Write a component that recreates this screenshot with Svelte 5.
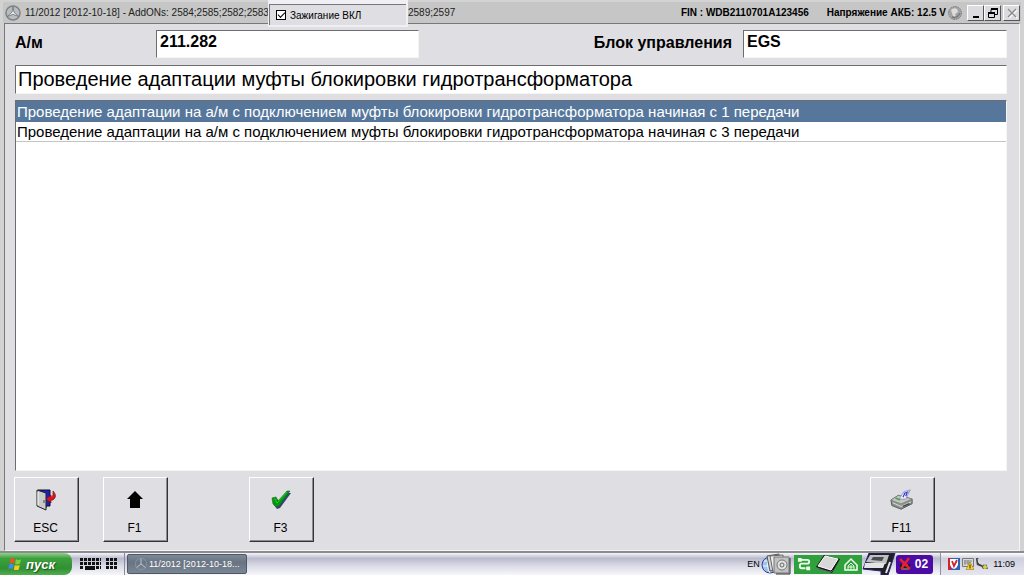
<script lang="ts">
  const vehicle = '211.282';
  const controlUnit = 'EGS';
  const heading = 'Проведение адаптации муфты блокировки гидротрансформатора';

  const actions = [
    'Проведение адаптации на а/м с подключением муфты блокировки гидротрансформатора начиная с 1 передачи',
    'Проведение адаптации на а/м с подключением муфты блокировки гидротрансформатора начиная с 3 передачи'
  ];

  let selected = $state(0);
  let ignition = $state(true);
</script>

<div class="screen">
  <div class="window">
    <header class="titlebar">
      <svg class="star" viewBox="0 0 16 16">
        <circle cx="8" cy="8" r="7" fill="#b9bcbe" stroke="#7c8285" stroke-width="1.5" />
        <path d="M8 1.5 L9 7.2 L13.6 11.5 L8 9.4 L2.4 11.5 L7 7.2 Z" fill="#e8ebec" stroke="#6d7376" stroke-width=".8" />
      </svg>
      <span class="version">11/2012 [2012-10-18] - AddONs: 2584;2585;2582;2583;</span>
      <div class="popup-slot">
        <div class="popup">
          <label><input type="checkbox" bind:checked={ignition} />Зажигание ВКЛ</label>
        </div>
      </div>
      <span class="addons">2589;2597</span>
      <b class="fin">FIN : WDB2110701A123456</b>
      <b class="voltage">Напряжение АКБ: 12.5 V</b>
      <svg class="globe" viewBox="0 0 14 14">
        <circle cx="7" cy="7" r="6.5" fill="#a4a4a4" stroke="#777" stroke-dasharray="1.5 1" />
        <path d="M3 4 Q6 1 9 3 L10 6 L7 8 L8 11 L5 10 L4 7 Z" fill="#dcdcdc" />
        <path d="M4 11 Q9 13 12 7" fill="none" stroke="#7a7a7a" stroke-width="1.5" />
      </svg>
      <div class="controls">
        <button aria-label="Свернуть">
          <svg viewBox="0 0 12 12"><path d="M3 10 H9" stroke="#000" stroke-width="2" /></svg>
        </button>
        <button aria-label="Восстановить">
          <svg viewBox="0 0 12 12">
            <path d="M4 5 V2.5 H10.5 V7.5 H8" fill="none" stroke="#000" />
            <path d="M4 2 H11 M1 6 H8" stroke="#000" stroke-width="2" />
            <path d="M1.5 6 V10.5 H7.5 V6" fill="none" stroke="#000" />
          </svg>
        </button>
        <button class="close" aria-label="Закрыть" disabled>
          <svg viewBox="0 0 12 12">
            <path d="M3 3 L11 11 M11 3 L3 11" stroke="#fff" stroke-width="1.2" />
            <path d="M2 2 L10 10 M10 2 L2 10" stroke="#8b8b8b" stroke-width="1.4" />
          </svg>
        </button>
      </div>
    </header>

    <main>
      <div class="fields">
        <label for="vehicle">А/м</label>
        <input id="vehicle" value={vehicle} readonly />
        <label class="unit-label" for="unit">Блок управления</label>
        <input id="unit" value={controlUnit} readonly />
      </div>

      <h1>{heading}</h1>

      <div class="list">
        {#each actions as action, i}
          <button class="item" class:selected={selected === i} onclick={() => (selected = i)}>{action}</button>
        {/each}
      </div>

      <div class="keys">
        <button>
          <svg viewBox="0 0 22 24">
            <path d="M3 2 H15 V18 H11 V20" fill="#1a22c0" stroke="#111" />
            <path d="M2 2 L11 5 V22 L2 18 Z" fill="#c9cccb" stroke="#222" />
            <path d="M3 4 V17" stroke="#fff" />
            <path d="M9 12 V15" stroke="#444" />
            <path d="M18 3 Q23 8 18 12 H16 V15 L11 11 L16 7 V9.500 Q19 8 18 3 Z" fill="#e0141c" stroke="#74101c" stroke-width=".7" />
          </svg>
          ESC
        </button>
        <button class="up">
          <svg viewBox="0 0 22 24"><path d="M11 3 L19 11 H16 V20 H6 V11 H3 Z" fill="#000" /></svg>
          F1
        </button>
        <button class="ok">
          <svg viewBox="0 0 22 24">
            <path d="M4 11 L7 11 L9 14 L18 5 L21 5 L10 20 L7 21 L4 17 Z" fill="#3b3f78" />
            <path d="M2 10 L6 9 L8 13 L17 3 L20 3 L9 18 L6 19 L3 16 Z" fill="#079512" stroke="#067010" stroke-width=".6" />
            <path d="M4 11 L5 11 L7 15 L17 4" fill="none" stroke="#20cb2d" />
          </svg>
          F3
        </button>
        <button class="print">
          <svg viewBox="0 0 26 24">
            <path d="M1 12 L9 7 L24 11 V16 L12 22 L2 18 Z" fill="#8d918e" stroke="#555957" />
            <path d="M1 12 L9 7 L24 11 L12 16 Z" fill="#c5c9c6" stroke="#777" stroke-width=".6" />
            <path d="M10 11 L15 3 L22 1 L17 11 Z" fill="#f3f4ff" stroke="#77a" stroke-width=".7" />
            <path d="M14 9 L16 5 M17 8 L19 3 M15 5 L20 3" stroke="#3038d0" stroke-width="1.300" />
            <path d="M6 10 L11 12" stroke="#54a548" stroke-width="2" />
            <path d="M3 15 L12 19 L23 14" fill="none" stroke="#dfe2df" />
            <path d="M14 19 L21 16" stroke="#3f4341" stroke-width="1.5" />
          </svg>
          F11
        </button>
      </div>
    </main>
  </div>

  <footer class="taskbar">
    <button class="start">
      <svg viewBox="0 0 14 14">
        <path d="M2.500 2 Q4.500 .5 7 2 L6 6.500 Q3.500 5 1.500 6.500 Z" fill="#f25022" />
        <path d="M8 2.300 Q10.500 3.500 13 2.200 L12 6.700 Q9.500 8 7 6.800 Z" fill="#7fcf3c" />
        <path d="M1.300 7.500 Q3.500 6 5.800 7.500 L4.800 12 Q2.500 10.500 .3 12 Z" fill="#3f8cf3" />
        <path d="M6.800 8 Q9.300 9.200 11.800 7.900 L10.800 12.400 Q8.300 13.600 5.800 12.500 Z" fill="#ffc61c" />
      </svg>
      пуск
    </button>
    <div class="quick">
      <svg class="keyboard" viewBox="0 0 40 14">
        <path d="M1 2.500 H22 M1 6.500 H22 M1 10.500 H5 M17 10.500 H22 M27 2.500 H39 M27 6.500 H39 M27 10.500 H39" stroke="#111" stroke-width="3" stroke-dasharray="3 1" />
        <path d="M6 11 H16" stroke="#111" stroke-width="4" />
      </svg>
    </div>
    <button class="task">
      <svg viewBox="0 0 16 16">
        <circle cx="8" cy="8" r="6.500" fill="none" stroke="#8795a3" />
        <path d="M8 2 V8 L3 12 M8 8 L13 12" fill="none" stroke="#c5d0da" />
      </svg>
      11/2012 [2012-10-18...
    </button>
    <span class="lang">EN</span>
    <svg class="stack" viewBox="0 0 33 22">
      <circle cx="9" cy="12" r="8" fill="#9ec2ea" stroke="#2b3f95" />
      <path d="M3 8 H14 M2 13 H14 M9 4 Q4 12 9 20" fill="none" stroke="#f3f8ff" />
      <path d="M6 3 L18 1 V16 L9 18 Z" fill="#d5d5d5" stroke="#555" />
      <path d="M9 3 L22 2 V18 L12 19 Z" fill="#ececec" stroke="#666" />
      <path d="M13 4 H28 V20 H13 Z" fill="#bfc1c2" stroke="#777" />
      <circle cx="21" cy="12" r="5" fill="#e1e2e2" stroke="#777" />
      <circle cx="21" cy="12" r="2" fill="none" stroke="#666" />
      <path d="M29 5 V21 H15" fill="none" stroke="#333" />
    </svg>
    <div class="green">
      <svg class="link" viewBox="0 0 16 16">
        <path d="M2 3 H11 Q13 3 13 5 Q13 7 11 7 H5 Q3 7 3 9.500 Q3 12 5 12 H9 M13 12 H10" fill="none" stroke="#eefff0" stroke-width="2" />
        <path d="M1 1 H5 V5 H1 Z M10 10 H14 V14 H10 Z" fill="#eefff0" />
      </svg>
      <svg class="tablet" viewBox="0 0 24 20">
        <path d="M0 13 L8 1 L24 5 L16 19 Z" fill="#161616" />
        <path d="M2 12 L9 2 L22 5 L15 16 Z" fill="#d7d8d7" stroke="#fff" />
        <path d="M2 15 L15 18 L17 16" fill="none" stroke="#70548f" />
      </svg>
      <svg class="home" viewBox="0 0 14 14">
        <path d="M1 8 L7 2 L13 8 V13 H1 Z" fill="none" stroke="#f2fff2" stroke-width="1.500" />
        <path d="M4 13 V9 L7 6 L10 9 V13 M7 8 V13 M4 10 H10" fill="none" stroke="#e2ffe2" />
      </svg>
    </div>
    <svg class="device" viewBox="0 0 34 22">
      <path d="M1 16 L7 0 H33 L26 22 H19 V18 Z" fill="#202024" stroke="#29237b" />
      <path d="M4 9 L8 2 H27 L24 11 Z" fill="#bfc0c2" />
      <path d="M9 7 L11 4 H22 L20 8 Z" fill="#4b4c54" />
      <path d="M3 10 H23 L21 15 H2 Z" fill="#e4e4e4" />
      <path d="M28 9 L24 20" stroke="#e7e7ee" stroke-width="2" />
    </svg>
    <div class="badge">
      <svg viewBox="0 0 12 14">
        <path d="M1 7 H11 V13 H1 Z" fill="#1b1829" />
        <path d="M2 12 H10 M3 8 H9" stroke="#c5a7ba" />
        <path d="M1 2 L11 12 M10 1 L2 12" stroke="#e3202b" stroke-width="2.500" />
      </svg>
      02
    </div>
    <div class="tray">
      <svg viewBox="0 0 12 12">
        <rect width="12" height="12" fill="#d3212e" />
        <path d="M3 0 H12 V12 H3 Z" fill="#2e61b5" />
        <path d="M2 1 H10 V7 Q9 10 6 11 Q3 10 2 7 Z" fill="#fff" />
        <path d="M4 3 L6 8 L9 2" fill="none" stroke="#d3212e" stroke-width="1.800" />
      </svg>
      <svg viewBox="0 0 12 12">
        <path d="M.5 .5 H11.500 V8.500 H.5 Z" fill="#d8d8d8" stroke="#777" />
        <path d="M2 3 H10 M2 5 H9 M3 2 V7 M6 2 V7" stroke="#888" />
        <path d="M8 4 L12 11.500 H4 Z" fill="#ffd52b" stroke="#9a7811" stroke-width=".6" />
        <path d="M8 6.500 V10.500" stroke="#222" />
      </svg>
      <svg viewBox="0 0 12 12">
        <path d="M1 0 L2 6 L7 8 L11 8" fill="none" stroke="#444" stroke-width="2.500" />
        <path d="M2 1 L3 5 L7 7" fill="none" stroke="#eee" />
        <path d="M5 8 H11 L12 11 H7 Z" fill="#5b5b5b" />
        <circle cx="9" cy="9" r="2" fill="#d7d33a" />
      </svg>
      <time>11:09</time>
    </div>
  </footer>
</div>

<style>
  :global(body) {
    margin: 0;
    background: #dfdee3;
  }

  .screen {
    display: flex;
    flex-direction: column;
    min-height: 100vh;
    font-family: "Liberation Sans", Arial, sans-serif;
    color: #000;
  }

  button,
  input {
    font-family: inherit;
    color: inherit;
    box-sizing: border-box;
    border-radius: 0;
    margin: 0;
    padding: 0;
  }

  svg {
    flex: none;
    display: block;
  }

  .window {
    flex: 1;
    display: flex;
    flex-direction: column;
    padding: 2px 3px 0;
    background: #d2d2d2;
    border-bottom: 2px solid #8b8b90;
  }

  /* title bar */
  .titlebar {
    display: flex;
    align-items: center;
    height: 21px;
    padding: 0 1px 0 2px;
    background: #c6c6c6;
    font-size: 10px;
    white-space: nowrap;
  }
  .star {
    width: 16px;
    height: 16px;
    margin-right: 4px;
  }
  .version {
    width: 243px;
    color: #222;
  }
  .popup-slot {
    position: relative;
    width: 140px;
    height: 21px;
  }
  .popup {
    position: absolute;
    z-index: 1;
    top: -2px;
    left: 0;
    right: 0;
    padding: 4px 2px 2px 1px;
    background: #f0f0f4;
  }
  .popup label {
    display: flex;
    align-items: center;
    gap: 4px;
    height: 20px;
    padding-left: 6px;
    background: #dfdee3;
    border-top: 1px solid #77777c;
    border-left: 1px solid #77777c;
  }
  .popup input {
    appearance: none;
    width: 10px;
    height: 10px;
    background: #fff;
    border: 1px solid #000;
    display: grid;
    place-items: center;
  }
  .popup input:checked::after {
    content: "";
    width: 7px;
    height: 4px;
    margin-bottom: 2px;
    border: solid #000;
    border-width: 0 0 1px 1px;
    box-sizing: border-box;
    transform: rotate(-45deg);
  }
  .addons {
    color: #222;
  }
  .fin {
    margin-left: auto;
  }
  .voltage {
    margin-left: 18px;
  }
  .globe {
    width: 14px;
    height: 14px;
    margin: 0 5px 0 2px;
  }
  .controls {
    display: flex;
  }
  .controls button {
    display: grid;
    place-items: center;
    width: 17px;
    height: 16px;
    background: #dcdce0;
    border: 1px solid;
    border-color: #fff #555 #555 #fff;
  }
  .controls .close {
    margin-left: 2px;
  }
  .controls svg {
    width: 12px;
    height: 12px;
  }

  /* content */
  main {
    flex: 1;
    display: flex;
    flex-direction: column;
    margin: 0 1px;
    padding: 6px 12px 8px 10px;
    background: #dfdee3;
    border: 1px solid #77777c;
    border-right-color: #f4f4f0;
    border-bottom-color: #f4f4f0;
  }
  .fields {
    display: grid;
    grid-template-columns: 141px 263px 1fr 264px;
    align-items: start;
    font-size: 16px;
    font-weight: bold;
    line-height: 26px;
  }
  .unit-label {
    text-align: right;
    padding-right: 11px;
  }
  .fields input,
  h1,
  .list {
    background: #fff;
    border: 1px solid;
    border-color: #6d6d70 #f6f6f0 #f6f6f0 #6d6d70;
  }
  .fields input {
    width: 100%;
    height: 28px;
    padding: 0 2px 5px 3px;
    font-size: 16px;
    font-weight: bold;
    outline: none;
  }
  h1 {
    margin: 7px 0 6px;
    padding-left: 2px;
    font-size: 20px;
    font-weight: normal;
    line-height: 27px;
  }
  .list {
    flex: 1;
    display: flex;
    flex-direction: column;
  }
  .item {
    height: 20px;
    padding-left: 1px;
    border: 0;
    border-bottom: 1px solid #c4c4c4;
    background: #fff;
    font-size: 15px;
    line-height: 19px;
    text-align: left;
    white-space: nowrap;
  }
  .item.selected {
    height: 21px;
    border-color: #56779b;
    background: #56779b;
    color: #fff;
  }

  /* function keys */
  .keys {
    display: flex;
    margin: 6px 0 0 -1px;
  }
  .keys button {
    display: flex;
    flex-direction: column;
    align-items: center;
    gap: 9px;
    width: 65px;
    height: 65px;
    padding: 10px 2px 0 0;
    background: #dfdee3;
    border: 1px solid;
    border-color: #fff #333 #333 #fff;
    box-shadow: inset -1px -1px #8c8c90;
    font-size: 12px;
    line-height: 15px;
  }
  .keys svg {
    width: 24px;
    height: 24px;
  }
  .keys .up {
    margin-left: 24px;
  }
  .keys .ok {
    margin-left: 81px;
  }
  .keys .print {
    margin-left: auto;
    margin-right: 72px;
  }

  /* taskbar */
  .taskbar {
    display: flex;
    align-items: center;
    height: 22px;
    background: linear-gradient(#f4f4fa, #b9bacc 25%, #dcdce8 60%, #f6f6fa);
    font-size: 10px;
  }
  .start {
    display: flex;
    align-items: center;
    gap: 4px;
    width: 72px;
    height: 22px;
    padding-left: 8px;
    border: 0;
    border-radius: 0 8px 8px 0;
    background: linear-gradient(#8fd28b, #3d9f3d 25%, #2f9133 70%, #52ae4e);
    color: #fff;
    font-size: 13px;
    font-weight: bold;
    font-style: italic;
    text-shadow: 1px 1px 1px #1c521c;
  }
  .start svg {
    width: 14px;
    height: 14px;
  }
  .quick {
    display: flex;
    align-items: center;
    height: 22px;
    margin: 0 2px;
    padding: 0 5px;
    border-right: 1px solid #8a8b9c;
  }
  .keyboard {
    width: 40px;
    height: 14px;
  }
  .task {
    display: flex;
    align-items: center;
    gap: 1px;
    width: 120px;
    height: 20px;
    padding-left: 6px;
    border: 1px solid #4d5967;
    border-radius: 2px;
    background: linear-gradient(#7d8996, #687482 40%, #7b8694);
    color: #fff;
    font-size: 9px;
    white-space: nowrap;
  }
  .task svg {
    width: 14px;
    height: 14px;
  }
  .lang {
    margin-left: auto;
    margin-right: 1px;
    font-size: 9px;
  }
  .stack {
    width: 33px;
    height: 22px;
  }
  .green {
    display: flex;
    align-items: center;
    gap: 4px;
    height: 19px;
    padding: 0 4px 0 3px;
    background: #30a03c;
  }
  .link {
    width: 15px;
    height: 15px;
  }
  .tablet {
    width: 24px;
    height: 20px;
  }
  .home {
    width: 14px;
    height: 14px;
  }
  .device {
    width: 34px;
    height: 22px;
  }
  .badge {
    display: flex;
    align-items: center;
    gap: 4px;
    height: 19px;
    padding: 0 5px 0 3px;
    border-radius: 3px;
    background: #4b0ba4;
    color: #fff;
    font-size: 12px;
    font-weight: bold;
  }
  .badge svg {
    width: 12px;
    height: 14px;
  }
  .tray {
    display: flex;
    align-items: center;
    gap: 2px;
    height: 22px;
    margin-left: 7px;
    padding: 0 9px 0 7px;
    border-left: 1px solid #8f90a4;
    background: linear-gradient(#fff, #cfd0de 25%, #e6e6f0);
  }
  .tray svg {
    width: 12px;
    height: 12px;
  }
  .tray time {
    margin-left: 3px;
    font-size: 9px;
  }
</style>
